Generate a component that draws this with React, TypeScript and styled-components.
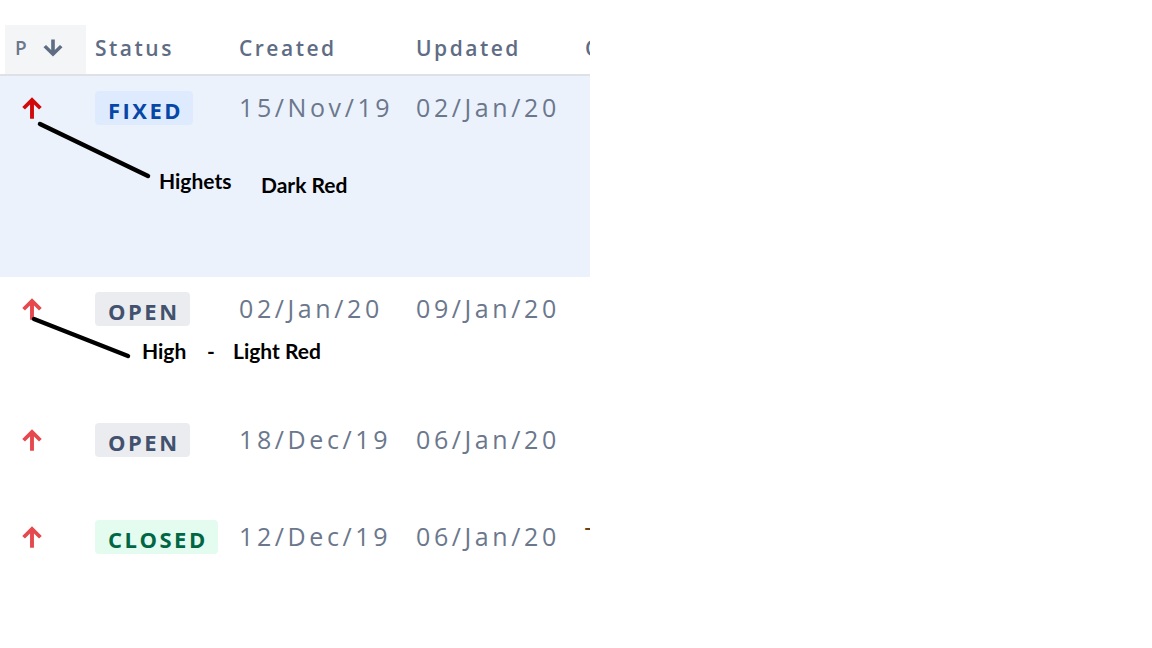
import React from "react";
import styled, { createGlobalStyle } from "styled-components";

const Global = createGlobalStyle`
  html, body { margin: 0; padding: 0; background: #ffffff; }
  body { font-family: "Open Sans", "Noto Sans", sans-serif; }
`;

const Page = styled.div`
  position: relative;
  width: 1152px;
  height: 648px;
  background: #ffffff;
  padding-top: 25px;
  box-sizing: border-box;
`;

const Table = styled.div`
  width: 590px;
  overflow: hidden;
`;

const cols = "89px 144px 177px 169px 200px";

const HeaderRow = styled.div`
  display: grid;
  grid-template-columns: ${cols};
  height: 49px;
  border-bottom: 2px solid #dfe1e6;
`;

const HeadCell = styled.div<{ $sorted?: boolean }>`
  display: flex;
  align-items: center;
  gap: 15px;
  padding-left: ${(p) => (p.$sorted ? "10px" : "6px")};
  padding-bottom: 3px;
  margin-left: ${(p) => (p.$sorted ? "5px" : "0")};
  margin-right: ${(p) => (p.$sorted ? "3px" : "0")};
  background: ${(p) => (p.$sorted ? "#f4f5f7" : "transparent")};
  color: #5e6c84;
  font-size: 21px;
  font-weight: 600;
  letter-spacing: 2.5px;
  white-space: nowrap;
`;

const PLabel = styled.span`
  font-size: 19px;
  font-weight: 600;
  color: #6b778c;
  letter-spacing: 0;
`;

const Row = styled.div<{ $h: number; $selected?: boolean }>`
  display: grid;
  grid-template-columns: ${cols};
  height: ${(p) => p.$h}px;
  background: ${(p) => (p.$selected ? "#ebf2fc" : "#ffffff")};
  align-items: start;
`;

const Cell = styled.div`
  height: 34px;
  margin-top: 15px;
  padding-left: 6px;
  display: flex;
  align-items: center;
  white-space: nowrap;
`;

const IconCell = styled(Cell)`
  padding-left: 19px;
`;

const DateText = styled.span`
  font-size: 25px;
  color: #6b778c;
  letter-spacing: 3.6px;
  margin-top: -3px;
`;

const OtherText = styled.span`
  font-size: 25px;
  color: #6b3e1a;
  margin-top: -3px;
`;

const lozengeColors: Record<string, { bg: string; fg: string }> = {
  fixed: { bg: "#deebff", fg: "#0747a6" },
  open: { bg: "#ebecf0", fg: "#42526e" },
  closed: { bg: "#e3fcef", fg: "#006644" },
};

const Lozenge = styled.span<{ $kind: string }>`
  display: inline-flex;
  align-items: center;
  min-width: 95px;
  height: 34px;
  padding: 3px 10px 0 13px;
  box-sizing: border-box;
  border-radius: 4px;
  background: ${(p) => lozengeColors[p.$kind].bg};
  color: ${(p) => lozengeColors[p.$kind].fg};
  font-size: 22px;
  font-weight: 700;
  letter-spacing: 2.5px;
  text-transform: uppercase;
`;

const Overlay = styled.svg`
  position: absolute;
  left: 0;
  top: 0;
  width: 1152px;
  height: 648px;
  pointer-events: none;
`;

const Note = styled.span<{ $x: number; $y: number }>`
  position: absolute;
  left: ${(p) => p.$x}px;
  top: ${(p) => p.$y}px;
  font-family: Lato, "Liberation Sans", sans-serif;
  font-weight: 700;
  font-size: 21px;
  line-height: 1;
  color: #000000;
  white-space: nowrap;
`;

const UpArrow = ({ color }: { color: string }) => (
  <svg width="26" height="26" viewBox="0 0 24 24">
    <path
      d="M12 2 L3 11 L5.5 13.4 L10.2 8.8 V22 H13.8 V8.8 L18.5 13.4 L21 11 Z"
      fill={color}
    />
  </svg>
);

const DownArrow = () => (
  <svg width="22" height="18" viewBox="0 0 22 18">
    <path
      d="M11 17.5 L1.5 8.3 L4 5.9 L9.2 11 V0.5 H12.8 V11 L18 5.9 L20.5 8.3 Z"
      fill="#5e6c84"
    />
  </svg>
);

type Issue = {
  prio: string;
  status: string;
  created: string;
  updated: string;
  h: number;
  selected?: boolean;
  other?: string;
};

const issues: Issue[] = [
  { prio: "#d00a0a", status: "fixed", created: "15/Nov/19", updated: "02/Jan/20", h: 201, selected: true },
  { prio: "#e5494d", status: "open", created: "02/Jan/20", updated: "09/Jan/20", h: 131 },
  { prio: "#e5494d", status: "open", created: "18/Dec/19", updated: "06/Jan/20", h: 97 },
  { prio: "#e5494d", status: "closed", created: "12/Dec/19", updated: "06/Jan/20", h: 90, other: "Task" },
];

export default function App() {
  return (
    <Page>
      <Global />
      <Table>
        <HeaderRow>
          <HeadCell $sorted>
            <PLabel>P</PLabel>
            <DownArrow />
          </HeadCell>
          <HeadCell>Status</HeadCell>
          <HeadCell>Created</HeadCell>
          <HeadCell>Updated</HeadCell>
          <HeadCell>Component</HeadCell>
        </HeaderRow>
        {issues.map((it, i) => (
          <Row key={i} $h={it.h} $selected={it.selected}>
            <IconCell>
              <UpArrow color={it.prio} />
            </IconCell>
            <Cell>
              <Lozenge $kind={it.status}>{it.status}</Lozenge>
            </Cell>
            <Cell>
              <DateText>{it.created}</DateText>
            </Cell>
            <Cell>
              <DateText>{it.updated}</DateText>
            </Cell>
            <Cell>{it.other && <OtherText>{it.other}</OtherText>}</Cell>
          </Row>
        ))}
      </Table>
      <Overlay>
        <line x1="40" y1="124" x2="148" y2="176" stroke="#000" strokeWidth="4.5" strokeLinecap="round" />
        <line x1="34" y1="319" x2="128" y2="356" stroke="#000" strokeWidth="4.5" strokeLinecap="round" />
      </Overlay>
      <Note $x={159} $y={170}>Highets</Note>
      <Note $x={261} $y={174}>Dark Red</Note>
      <Note $x={142} $y={340}>High</Note>
      <Note $x={207} $y={340}>-</Note>
      <Note $x={233} $y={340}>Light Red</Note>
    </Page>
  );
}
